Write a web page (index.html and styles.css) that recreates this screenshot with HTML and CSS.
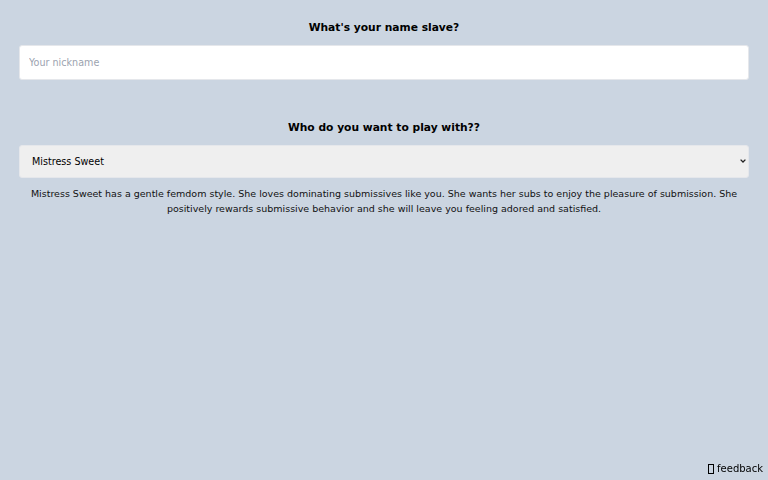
FILE: index.html
```html
<!DOCTYPE html>
<html lang="en">
<head>
<meta charset="utf-8">
<title>Play</title>
<link rel="stylesheet" href="styles.css">
</head>
<body>
<main class="page">
  <section class="field">
    <h2 class="label">What's your name slave?</h2>
    <input class="text-input" type="text" placeholder="Your nickname">
  </section>
  <section class="field field-second">
    <h2 class="label">Who do you want to play with??</h2>
    <div class="select-wrap">
      <select class="select">
        <option>Mistress Sweet</option>
      </select>
      <svg class="chevron" width="6" height="4" viewBox="0 0 6 4" aria-hidden="true"><path d="M0.6 0.6 L3 3 L5.4 0.6" fill="none" stroke="#222" stroke-width="1.3"/></svg>
    </div>
    <p class="desc">Mistress Sweet has a gentle femdom style. She loves dominating submissives like you. She wants her subs to enjoy the pleasure of submission. She positively rewards submissive behavior and she will leave you feeling adored and satisfied.</p>
  </section>
</main>
<a class="feedback" href="#"><span class="tofu"></span> feedback</a>
</body>
</html>
```
FILE: styles.css
```css
html, body {
  margin: 0;
  padding: 0;
  height: 100%;
}
body {
  background: #cbd5e1;
  font-family: "DejaVu Sans", sans-serif;
  color: #000;
}
.page {
  padding: 21px 19px 20px;
}
.field {
  display: flex;
  flex-direction: column;
}
.field-second {
  margin-top: 41px;
}
.label {
  margin: 0 0 10px;
  font-size: 10.7px;
  font-weight: bold;
  text-align: center;
  line-height: 14px;
}
.text-input {
  box-sizing: border-box;
  height: 35px;
  width: 100%;
  border: 1px solid #e5e7eb;
  border-radius: 3px;
  background: #fff;
  padding: 0 9px;
  font-family: "DejaVu Sans", sans-serif;
  font-size: 9.6px;
  outline: none;
}
.text-input::placeholder {
  color: #9ca3af;
}
.select-wrap {
  position: relative;
}
.select {
  display: block;
  box-sizing: border-box;
  height: 33px;
  width: 100%;
  border: 1px solid #e5e7eb;
  border-radius: 3px;
  background: #efefef;
  padding: 0 12px;
  font-family: "DejaVu Sans", sans-serif;
  font-size: 9.6px;
  color: #000;
  appearance: none;
  -webkit-appearance: none;
}
.chevron {
  position: absolute;
  right: 3px;
  top: 14px;
  pointer-events: none;
}
.desc {
  margin: 8px 0 0;
  font-size: 9.5px;
  line-height: 15px;
  text-align: center;
  color: #111;
}
.feedback {
  position: fixed;
  right: 5px;
  bottom: 6px;
  font-size: 10px;
  color: #000;
  text-decoration: none;
  display: flex;
  align-items: center;
  gap: 3px;
}
.tofu {
  display: inline-block;
  width: 4px;
  height: 8px;
  border: 1px solid #000;
}
```
